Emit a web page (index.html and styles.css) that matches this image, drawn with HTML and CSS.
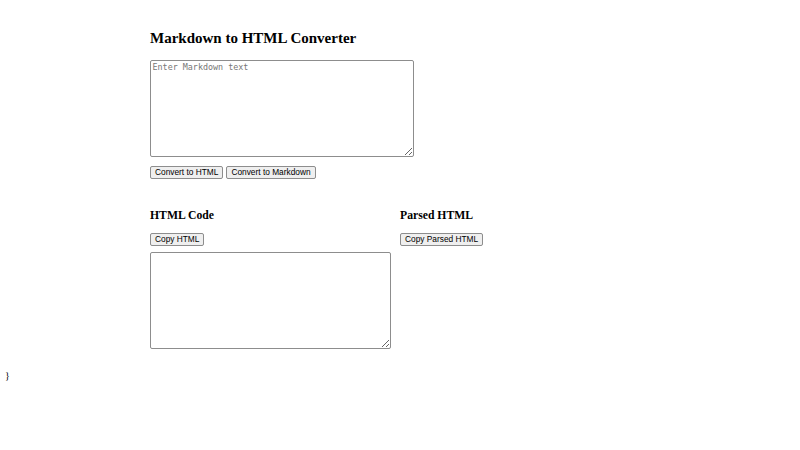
FILE: index.html
```html
<!DOCTYPE html>
<html>
<head>
  <meta charset="utf-8">
  <title>Markdown to HTML Converter</title>
  <link rel="stylesheet" href="styles.css">
</head>
<body>
  <div class="container">
    <h2>Markdown to HTML Converter</h2>
    <textarea id="markdown" class="md_input" placeholder="Enter Markdown text"></textarea>
    <div class="actions">
      <button class="btn" onclick="toHtml()">Convert to HTML</button>
      <button class="btn" onclick="toMarkdown()">Convert to Markdown</button>
    </div>
    <div class="output">
      <div class="col">
        <h3>HTML Code</h3>
        <button class="btn" onclick="copyHtml()">Copy HTML</button>
        <textarea id="html_code" class="html_output"></textarea>
      </div>
      <div class="col">
        <h3>Parsed HTML</h3>
        <button class="btn" onclick="copyParsed()">Copy Parsed HTML</button>
        <div id="parsed"></div>
      </div>
    </div>
  </div>
  }
  <script>
    function toHtml() {
      var md = document.getElementById("markdown").value;
      var html = md
        .replace(/^### (.*)$/gm, "<h3>$1</h3>")
        .replace(/^## (.*)$/gm, "<h2>$1</h2>")
        .replace(/^# (.*)$/gm, "<h1>$1</h1>")
        .replace(/\*\*(.*?)\*\*/g, "<strong>$1</strong>")
        .replace(/\*(.*?)\*/g, "<em>$1</em>");
      document.getElementById("html_code").value = html;
      document.getElementById("parsed").innerHTML = html;
    }
    function toMarkdown() {
      var html = document.getElementById("html_code").value;
      var md = html
        .replace(/<h1>(.*?)<\/h1>/g, "# $1")
        .replace(/<h2>(.*?)<\/h2>/g, "## $1")
        .replace(/<h3>(.*?)<\/h3>/g, "### $1")
        .replace(/<strong>(.*?)<\/strong>/g, "**$1**")
        .replace(/<em>(.*?)<\/em>/g, "*$1*");
      document.getElementById("markdown").value = md;
    }
    function copyHtml() {
      navigator.clipboard.writeText(document.getElementById("html_code").value);
    }
    function copyParsed() {
      navigator.clipboard.writeText(document.getElementById("parsed").innerHTML);
    }
  </script>
</body>
</html>
```
FILE: styles.css
```css
body {
  margin: 5px;
  font-family: "Liberation Serif", serif;
  font-size: 10px;
  color: #000;
  background: #fff;
}
.container {
  width: 500px;
  margin: 0 auto;
  padding: 12.5px 0 21px;
}
h2 {
  font-size: 15px;
  margin: 12.5px 0;
}
h3 {
  font-size: 11.7px;
  margin: 12.5px 0 10.5px;
}
textarea {
  display: block;
  box-sizing: border-box;
  font-family: "DejaVu Sans Mono", monospace;
  font-size: 8.4px;
  padding: 1px 1.5px;
  border: 1px solid #8d8d8d;
  border-radius: 2px;
  resize: both;
}
textarea::placeholder {
  color: #777;
}
.md_input {
  width: 264px;
  height: 97px;
}
.html_output {
  width: 241px;
  height: 97px;
}
.actions {
  display: flex;
  gap: 3px;
  margin-top: 9px;
}
.btn {
  font-family: "Liberation Sans", Arial, sans-serif;
  font-size: 8.33px;
  height: 13px;
  padding: 0 4px;
  border: 1px solid #8d8d8d;
  border-radius: 2px;
  background: #efefef;
  color: #000;
}
.output {
  display: flex;
  margin-top: 18px;
}
.col {
  width: 250px;
}
.col .btn {
  display: block;
  margin-bottom: 6px;
}
```
